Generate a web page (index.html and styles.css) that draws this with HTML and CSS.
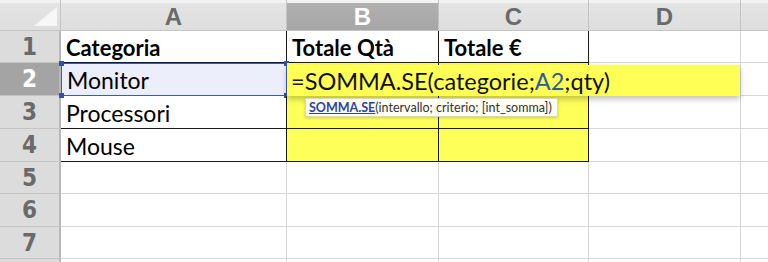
FILE: index.html
```html
<!DOCTYPE html>
<html lang="it">
<head>
<meta charset="utf-8">
<link rel="stylesheet" href="styles.css">
</head>
<body>
<div class="sheet">
  <div class="grid">
    <div class="hd corner"><span class="tri"></span></div>
    <div class="hd col">A</div>
    <div class="hd col sel">B</div>
    <div class="hd col">C</div>
    <div class="hd col">D</div>
    <div class="hd col"></div>

    <div class="hd row">1</div>
    <div class="c t b">Categoria</div>
    <div class="c t b">Totale Qtà</div>
    <div class="c t b">Totale €</div>
    <div class="c"></div>
    <div class="c"></div>

    <div class="hd row sel">2</div>
    <div class="c t a2">Monitor<i class="h tl"></i><i class="h tr"></i><i class="h bl"></i><i class="h br"></i></div>
    <div class="c t y"></div>
    <div class="c t y"></div>
    <div class="c"></div>
    <div class="c"></div>

    <div class="hd row">3</div>
    <div class="c t">Processori</div>
    <div class="c t y"></div>
    <div class="c t y"></div>
    <div class="c"></div>
    <div class="c"></div>

    <div class="hd row">4</div>
    <div class="c t">Mouse</div>
    <div class="c t y"></div>
    <div class="c t y"></div>
    <div class="c"></div>
    <div class="c"></div>

    <div class="hd row">5</div>
    <div class="c"></div><div class="c"></div><div class="c"></div><div class="c"></div><div class="c"></div>
    <div class="hd row">6</div>
    <div class="c"></div><div class="c"></div><div class="c"></div><div class="c"></div><div class="c"></div>
    <div class="hd row">7</div>
    <div class="c"></div><div class="c"></div><div class="c"></div><div class="c"></div><div class="c"></div>
    <div class="hd row"></div>
    <div class="c"></div><div class="c"></div><div class="c"></div><div class="c"></div><div class="c"></div>
  </div>

  <div class="editor">=SOMMA.SE(categorie;<span class="ref">A2</span>;qty)</div>
  <div class="tip"><span class="fn">SOMMA.SE</span>(intervallo; criterio; [int_somma])</div>
</div>
</body>
</html>
```

FILE: styles.css
```css
* { box-sizing: border-box; }
html, body { margin: 0; padding: 0; background: #fff; }
body { width: 768px; height: 262px; overflow: hidden; }

.sheet { position: relative; width: 768px; height: 262px; overflow: hidden; }

.grid {
  display: grid;
  grid-template-columns: 61px 226px 152px 150px 152px 40px;
  grid-template-rows: 31px 32px 33px 33px 33px 32px 33px 32px 20px;
}

.hd {
  background: linear-gradient(#f3f3f3 0, #f3f3f3 3px, #e4e4e4 3px, #dedede 100%);
  border-right: 1px solid #c4c4c4;
  border-bottom: 1px solid #c4c4c4;
  color: #6a6a6a;
  font-family: "Liberation Sans", Arial, sans-serif;
  font-weight: bold;
  display: flex;
  align-items: center;
  justify-content: center;
}
.hd.col { font-size: 24px; padding-top: 4px; }
.hd.row {
  background: #dcdcdc;
  font-family: "Liberation Sans Narrow", "DejaVu Sans Condensed", sans-serif;
  font-size: 24px;
  border-right: 2px solid #b8b8b8;
}
.hd.col.sel { background: linear-gradient(#f3f3f3 0, #f3f3f3 3px, #b0b0b0 3px, #a6a6a6 100%); color: #fff; }
.hd.row.sel { background: #a4a4a4; color: #fff; }

.corner { position: relative; }
.tri {
  width: 0; height: 0;
  border-left: 23px solid transparent;
  border-bottom: 19px solid #f7f7f7;
  position: absolute; right: 3px; bottom: 4px;
}

.c {
  border-right: 1px solid #d6d6d6;
  border-bottom: 1px solid #d6d6d6;
  font-family: Lato, "Open Sans", sans-serif;
  font-size: 23px;
  color: #000;
  display: flex;
  align-items: center;
  padding-left: 5px;
  padding-top: 1px;
  position: relative;
}
.c.t { border-right: 1px solid #1a1a1a; border-bottom: 1px solid #1a1a1a; }
.c.b { font-weight: bold; font-size: 22px; }
.c.y { background: #ffff5a; }

.a2 { background: #eceefb; border: 1px solid #3e5aa8 !important; }
.h { position: absolute; width: 5px; height: 5px; background: #3453a6; }
.tl { left: -3px; top: -3px; }
.tr { right: -3px; top: -3px; }
.bl { left: -3px; bottom: -3px; }
.br { right: -3px; bottom: -3px; }

.editor {
  position: absolute;
  left: 287px; top: 65px;
  width: 453px; height: 31px;
  background: #ffff55;
  box-shadow: 0 3px 6px rgba(0,0,0,0.25);
  font-family: Lato, "Open Sans", sans-serif;
  font-size: 23.5px;
  color: #111;
  padding-left: 4px;
  display: flex;
  align-items: center;
}
.ref { color: #2d5c9c; }

.tip {
  position: absolute;
  left: 305px; top: 98px;
  width: 253px; height: 19px;
  background: #fdfdf3;
  border: 1px solid #d8d8c0;
  box-shadow: 0 1px 3px rgba(0,0,0,0.2);
  font-family: Lato, "Open Sans", sans-serif;
  font-size: 12.5px;
  color: #333;
  padding-left: 3px;
  display: flex;
  align-items: center;
}
.fn { color: #2b47a0; font-weight: bold; text-decoration: underline; }
```
